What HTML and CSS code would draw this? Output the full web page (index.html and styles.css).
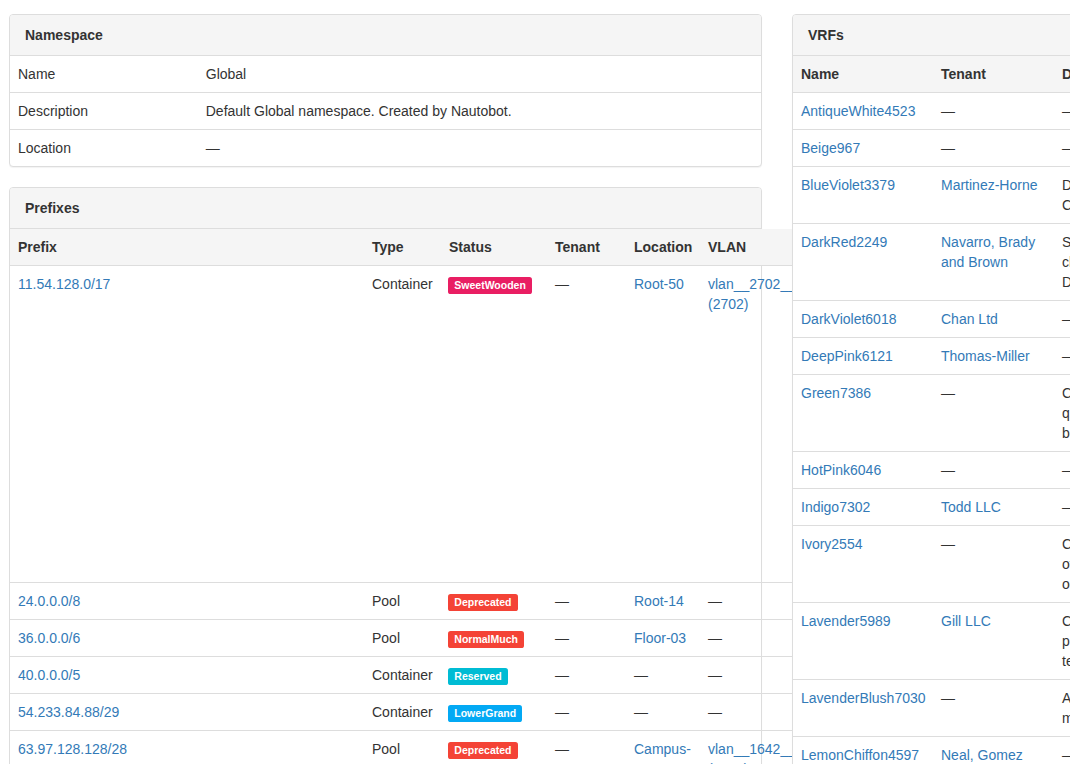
FILE: index.html
```html
<!DOCTYPE html>
<html lang="en">
<head>
<meta charset="utf-8">
<title>Namespace Global</title>
<link rel="stylesheet" href="styles.css">
</head>
<body>
<div class="row">
  <div class="col col-left">
    <div class="panel">
      <div class="panel-heading">Namespace</div>
      <table class="table attr-table">
        <tbody>
          <tr><td class="attr-key">Name</td><td>Global</td></tr>
          <tr><td class="attr-key">Description</td><td>Default Global namespace. Created by Nautobot.</td></tr>
          <tr><td class="attr-key">Location</td><td>—</td></tr>
        </tbody>
      </table>
    </div>
    <div class="panel">
      <div class="panel-heading">Prefixes</div>
      <table class="table fixed prefix-table">
        <colgroup>
          <col class="w-prefix"><col class="w-type"><col class="w-status"><col class="w-tenant"><col class="w-location"><col class="w-vlan"><col class="w-desc">
        </colgroup>
        <thead>
          <tr><th>Prefix</th><th>Type</th><th>Status</th><th>Tenant</th><th>Location</th><th>VLAN</th><th>Description</th></tr>
        </thead>
        <tbody>
          <tr>
            <td><a href="#">11.54.128.0/17</a></td>
            <td>Container</td>
            <td><span class="label l-pink">SweetWooden</span></td>
            <td>—</td>
            <td><a href="#">Root-50</a></td>
            <td><a href="#">vlan__2702__Springfield (2702)</a></td>
            <td>Many reason quality<br>southern enough<br>political both.<br>Bill ask natural<br>office agree<br>fund somebody.<br>Decade world<br>nation paper<br>wonder sister.<br>Stop mention<br>finish yard<br>season though.<br>Mission fact<br>lawyer avoid<br>event.</td>
          </tr>
          <tr>
            <td><a href="#">24.0.0.0/8</a></td>
            <td>Pool</td>
            <td><span class="label l-red">Deprecated</span></td>
            <td>—</td>
            <td><a href="#">Root-14</a></td>
            <td>—</td>
            <td>—</td>
          </tr>
          <tr>
            <td><a href="#">36.0.0.0/6</a></td>
            <td>Pool</td>
            <td><span class="label l-red">NormalMuch</span></td>
            <td>—</td>
            <td><a href="#">Floor-03</a></td>
            <td>—</td>
            <td>—</td>
          </tr>
          <tr>
            <td><a href="#">40.0.0.0/5</a></td>
            <td>Container</td>
            <td><span class="label l-cyan">Reserved</span></td>
            <td>—</td>
            <td>—</td>
            <td>—</td>
            <td>—</td>
          </tr>
          <tr>
            <td><a href="#">54.233.84.88/29</a></td>
            <td>Container</td>
            <td><span class="label l-lightblue">LowerGrand</span></td>
            <td>—</td>
            <td>—</td>
            <td>—</td>
            <td>—</td>
          </tr>
          <tr>
            <td><a href="#">63.97.128.128/28</a></td>
            <td>Pool</td>
            <td><span class="label l-red">Deprecated</span></td>
            <td>—</td>
            <td><a href="#">Campus-05</a></td>
            <td><a href="#">vlan__1642__Lakewood (1642)</a></td>
            <td>—</td>
          </tr>
        </tbody>
      </table>
    </div>
  </div>
  <div class="col col-right">
    <div class="panel">
      <div class="panel-heading">VRFs</div>
      <table class="table fixed vrf-table">
        <colgroup>
          <col class="w-name"><col class="w-vtenant"><col>
        </colgroup>
        <thead>
          <tr><th>Name</th><th>Tenant</th><th>Description</th></tr>
        </thead>
        <tbody>
          <tr><td><a href="#">AntiqueWhite4523</a></td><td>—</td><td>—</td></tr>
          <tr><td><a href="#">Beige967</a></td><td>—</td><td>—</td></tr>
          <tr><td><a href="#">BlueViolet3379</a></td><td><a href="#">Martinez-Horne</a></td><td>Drive effort realize wall finally.<br>Cover rather young.</td></tr>
          <tr><td><a href="#">DarkRed2249</a></td><td><a href="#">Navarro, Brady and Brown</a></td><td>Site hard kind simply.<br>charge everyone stuff morning.<br>Dream level.</td></tr>
          <tr><td><a href="#">DarkViolet6018</a></td><td><a href="#">Chan Ltd</a></td><td>—</td></tr>
          <tr><td><a href="#">DeepPink6121</a></td><td><a href="#">Thomas-Miller</a></td><td>—</td></tr>
          <tr><td><a href="#">Green7386</a></td><td>—</td><td>Cold sense bill.<br>question human wind.<br>because.</td></tr>
          <tr><td><a href="#">HotPink6046</a></td><td>—</td><td>—</td></tr>
          <tr><td><a href="#">Indigo7302</a></td><td><a href="#">Todd LLC</a></td><td>—</td></tr>
          <tr><td><a href="#">Ivory2554</a></td><td>—</td><td>Candidate drop.<br>official agency.<br>occur.</td></tr>
          <tr><td><a href="#">Lavender5989</a></td><td><a href="#">Gill LLC</a></td><td>Color team.<br>professor skill.<br>tend.</td></tr>
          <tr><td><a href="#">LavenderBlush7030</a></td><td>—</td><td>Available range.<br>material.</td></tr>
          <tr><td><a href="#">LemonChiffon4597</a></td><td><a href="#">Neal, Gomez and Lee</a></td><td>—</td></tr>
        </tbody>
      </table>
    </div>
  </div>
</div>
</body>
</html>
```

FILE: styles.css
```css
html {
  overflow: hidden;
}

body {
  margin: 0;
  font-family: "Liberation Sans", Arial, Helvetica, sans-serif;
  font-size: 14px;
  line-height: 20px;
  color: #333;
  background: #fff;
}

a {
  color: #337ab7;
  text-decoration: none;
}

.row {
  display: flex;
  align-items: flex-start;
  padding: 14px 0 0 9px;
}

.col {
  flex: none;
  width: 753px;
}

.col-left {
  padding-right: 30px;
  overflow: hidden;
}

.panel {
  background: #fff;
  border: 1px solid #ddd;
  border-radius: 4px;
  margin-bottom: 20px;
  box-shadow: 0 1px 1px rgba(0, 0, 0, 0.05);
}

.panel-heading {
  padding: 10px 15px;
  background: #f5f5f5;
  border-bottom: 1px solid #ddd;
  border-radius: 3px 3px 0 0;
  font-weight: bold;
}

.table {
  width: 100%;
  border-collapse: collapse;
  border-spacing: 0;
}

.table.fixed {
  table-layout: fixed;
}

.table th,
.table td {
  padding: 8px;
  text-align: left;
  vertical-align: top;
  border-top: 1px solid #ddd;
}

.table th {
  background: #f5f5f5;
  font-weight: bold;
  border-top: 0;
  border-bottom: 1px solid #ddd;
}

.table tbody tr:first-child td {
  border-top: 0;
}

.attr-key {
  width: 25%;
}

.w-prefix { width: 354px; }
.w-type { width: 77px; }
.w-status { width: 106px; }
.w-tenant { width: 79px; }
.w-location { width: 74px; }
.w-vlan { width: 170px; }
.w-desc { width: 260px; }

.w-name { width: 140px; }
.w-vtenant { width: 121px; }

.label {
  display: inline;
  padding: 0.2em 0.6em 0.3em;
  margin-left: -1px;
  font-size: 75%;
  font-weight: bold;
  line-height: 1;
  color: #fff;
  white-space: nowrap;
  vertical-align: baseline;
  border-radius: 0.25em;
}

.l-pink { background: #e91e63; }
.l-red { background: #f44336; }
.l-cyan { background: #00bcd4; }
.l-lightblue { background: #03a9f4; }
```
